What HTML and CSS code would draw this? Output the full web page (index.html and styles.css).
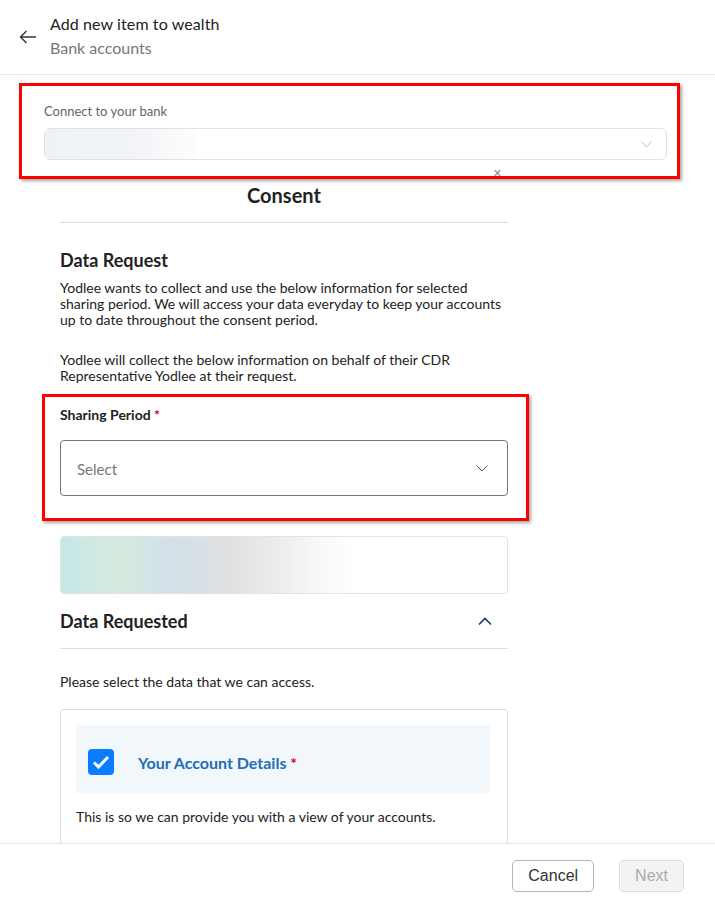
FILE: index.html
```html
<!DOCTYPE html>
<html>
  <head>
    <title>Add new item to wealth</title>
    <link rel="stylesheet" href="styles.css">
  </head>
  <body>
    <header class="topbar">
      <svg class="back" width="18" height="14" viewBox="0 0 18 14">
        <path d="M17 7H1.5M7.5 1L1.5 7l6 6" fill="none" stroke="#333" stroke-width="1.4"/>
      </svg>
      <div class="titles">
        <div class="title">Add new item to wealth</div>
        <div class="subtitle">Bank accounts</div>
      </div>
    </header>

    <main class="content">
      <!-- bank picker -->
      <section class="mark bank">
        <div class="bank-label">Connect to your bank</div>
        <div class="bank-input">
          <div class="bank-skeleton"></div>
          <svg class="bank-chevron" width="11" height="7" viewBox="0 0 11 7">
            <path d="M0.5 0.5l5 5.5 5-5.5" fill="none" stroke="#bbb" stroke-width="1"/>
          </svg>
        </div>
      </section>

      <!-- consent widget -->
      <section class="consent">
        <span class="close">&#x2715;</span>
        <h1 class="consent-title">Consent</h1>

        <h2 class="section-title">Data Request</h2>
        <p class="text">Yodlee wants to collect and use the below information for selected sharing period. We will access your data everyday to keep your accounts up to date throughout the consent period.</p>
        <p class="text gap">Yodlee will collect the below information on behalf of their CDR Representative Yodlee at their request.</p>

        <div class="mark period">
          <div class="field-label">Sharing Period <span class="req">*</span></div>
          <div class="select">
            <span>Select</span>
            <svg width="12" height="7" viewBox="0 0 12 7">
              <path d="M0.5 0.5l5.5 5.5 5.5-5.5" fill="none" stroke="#555" stroke-width="1"/>
            </svg>
          </div>
        </div>

        <div class="banner"></div>

        <div class="accordion">
          <h2 class="section-title">Data Requested</h2>
          <svg width="14" height="9" viewBox="0 0 14 9">
            <path d="M1 7.5l6-6 6 6" fill="none" stroke="#1d3b63" stroke-width="1.6"/>
          </svg>
        </div>

        <p class="text hint">Please select the data that we can access.</p>

        <div class="card">
          <div class="card-head">
            <span class="checkbox">
              <svg width="18" height="14" viewBox="0 0 18 14">
                <path d="M2 7.5l4.5 4.5L16 2" fill="none" stroke="#fff" stroke-width="3"/>
              </svg>
            </span>
            <span class="card-title">Your Account Details <span class="req">*</span></span>
          </div>
          <p class="text card-text">This is so we can provide you with a view of your accounts.</p>
        </div>
      </section>
    </main>

    <footer class="footer">
      <button class="btn">Cancel</button>
      <button class="btn disabled">Next</button>
    </footer>
  </body>
</html>
```

FILE: styles.css
```css
html, body {
  margin: 0;
  height: 100%;
}
body {
  display: flex;
  flex-direction: column;
  height: 100vh;
  background: #fff;
  font-family: Lato, "Noto Sans", sans-serif;
  color: #222;
}

/* header */
.topbar {
  display: flex;
  align-items: center;
  gap: 13px;
  height: 74px;
  padding-left: 19px;
  border-bottom: 1px solid #e9e9e9;
  box-sizing: content-box;
}
.titles {
  margin-top: -2px;
}
.title {
  font-size: 16px;
  line-height: 24px;
  color: #222;
  letter-spacing: 0.1px;
}
.subtitle {
  font-size: 16px;
  line-height: 24px;
  color: #777;
}

/* scroll area */
.content {
  flex: 1;
  overflow: hidden;
  padding-top: 8px;
}

/* red annotation boxes */
.mark {
  border: 3px solid #ff0000;
  box-shadow: 2px 2px 3px rgba(0, 0, 0, 0.35);
  position: relative;
  z-index: 1;
  background: #fff;
}

.bank {
  margin-left: 19px;
  padding: 17px 10px 16px 22px;
  width: 623px;
}
.bank-label {
  font-size: 13px;
  line-height: 16px;
  color: #666;
}
.bank-input {
  margin-top: 9px;
  height: 30px;
  border: 1px solid #e1e1e1;
  border-radius: 6px;
  display: flex;
  align-items: center;
  justify-content: space-between;
  overflow: hidden;
}
.bank-skeleton {
  width: 150px;
  height: 100%;
  background: linear-gradient(90deg, #eef2f6 0%, #f2f4f7 60%, #fdfdfe 100%);
}
.bank-chevron {
  margin-right: 14px;
}

/* consent */
.consent {
  position: relative;
  width: 448px;
  margin-left: 60px;
  padding-top: 4px;
}
.close {
  position: absolute;
  right: 6px;
  top: -12px;
  z-index: 2;
  font-size: 11px;
  color: #888;
  font-family: "DejaVu Sans", sans-serif;
}
.consent-title {
  margin: 0;
  font-size: 20px;
  line-height: 24px;
  font-weight: bold;
  text-align: center;
  padding-bottom: 15px;
  border-bottom: 1px solid #ddd;
}
.section-title {
  margin: 26px 0 0;
  font-size: 18px;
  line-height: 22px;
  font-weight: bold;
}
.text {
  margin: 9px 0 0;
  font-size: 14px;
  line-height: 16px;
  color: #222;
}
.text.gap {
  margin-top: 24px;
}
.req {
  color: #d0021b;
}

.period {
  margin: 10px -21px 0 -18px;
  padding: 10px 18px 22px 15px;
}
.field-label {
  font-size: 14px;
  line-height: 16px;
  font-weight: bold;
}
.select {
  margin-top: 17px;
  height: 53px;
  border: 1px solid #777;
  border-radius: 4px;
  display: flex;
  align-items: center;
  justify-content: space-between;
  padding: 1px 19px 0 16px;
  font-size: 15px;
  color: #777;
}

.banner {
  margin-top: 15px;
  height: 56px;
  border: 1px solid #e3e3e3;
  border-radius: 4px;
  background: linear-gradient(90deg, #c6e6e6 0%, #d6eadf 13%, #d2e0e8 24%, #dfe0e1 38%, #ececec 48%, #f6f6f6 56%, #ffffff 66%);
  background-clip: padding-box;
}

.accordion {
  display: flex;
  align-items: center;
  justify-content: space-between;
  padding: 16px 16px 16px 0;
  border-bottom: 1px solid #ddd;
}
.accordion .section-title {
  margin: 0;
}
.hint {
  margin-top: 25px;
}

.card {
  margin-top: 19px;
  border: 1px solid #ddd;
  border-radius: 4px;
  padding: 15px 17px 20px 15px;
}
.card-head {
  display: flex;
  align-items: center;
  gap: 24px;
  height: 68px;
  padding: 6px 12px 0;
  box-sizing: border-box;
  background: #f2f7fb;
}
.checkbox {
  width: 26px;
  height: 26px;
  border-radius: 4px;
  background: #0b7cff;
  display: flex;
  align-items: center;
  justify-content: center;
}
.card-title {
  font-size: 16px;
  font-weight: bold;
  color: #1f6db4;
}
.card-text {
  margin-top: 16px;
}

/* footer */
.footer {
  display: flex;
  justify-content: flex-end;
  align-items: flex-start;
  gap: 25px;
  height: 37px;
  padding: 16px 31px 0 0;
  border-top: 1px solid #e5e5e5;
  background: #fff;
}
.btn {
  height: 32px;
  padding: 0 15px;
  font-family: "Liberation Sans", Arial, sans-serif;
  font-size: 16px;
  color: #333;
  background: #fff;
  border: 1px solid #b5b5b5;
  border-radius: 5px;
}
.btn.disabled {
  color: #aaa;
  background: #f3f3f3;
  border-color: #ddd;
}
```
